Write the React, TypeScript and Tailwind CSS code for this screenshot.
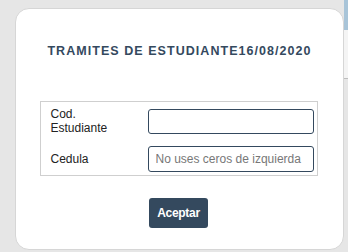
import React from "react";

export default function App() {
  return (
    <div
      className="w-[348px] h-[252px] bg-[#e6e6e6] flex overflow-hidden"
      style={{ fontFamily: '"Liberation Sans", Arial, sans-serif' }}
    >
      <div className="ml-[15px] mt-[8px] w-[329px] h-[242px] bg-white rounded-[14px] border border-[#d6d6d6] flex flex-col items-center">
        <h1 className="mt-[34px] text-[12.5px] font-bold tracking-[1.05px] text-[#34495e] leading-4">
          TRAMITES DE ESTUDIANTE16/08/2020
        </h1>
        <div className="mt-[42px] -ml-[2px] w-[278px] border border-[#cfcfcf] pl-[10px] pr-[3px] pt-[5px] pb-[3px] flex flex-col gap-[11px]">
          <div className="flex items-center justify-between">
            <label className="text-[12px] leading-[14px] text-[#222]">
              Cod.
              <br />
              Estudiante
            </label>
            <input
              type="text"
              className="w-[166px] h-[25px] rounded-[3px] border border-[#34495e] px-2 text-[12px] outline-none"
            />
          </div>
          <div className="flex items-center justify-between">
            <label className="text-[12px] leading-[14px] text-[#222]">Cedula</label>
            <input
              type="text"
              placeholder="No uses ceros de izquierda"
              className="w-[166px] h-[26px] rounded-[3px] border border-[#34495e] px-[7px] text-[12px] outline-none placeholder:text-[#777]"
            />
          </div>
        </div>
        <button className="mt-[22px] -ml-[2px] w-[59px] h-[30px] rounded-[3px] bg-[#34495e] text-white text-[12px] font-semibold tracking-[-0.3px]">
          Aceptar
        </button>
      </div>
      <div className="ml-auto w-[4px] h-full flex flex-col">
        <div className="h-[30px] bg-[#a8c4d8]" />
        <div className="h-[48px] bg-[#f4f4f4]" />
        <div className="h-px bg-[#bdbdbd]" />
        <div className="flex-1 bg-[#e6e6e6]" />
      </div>
    </div>
  );
}
